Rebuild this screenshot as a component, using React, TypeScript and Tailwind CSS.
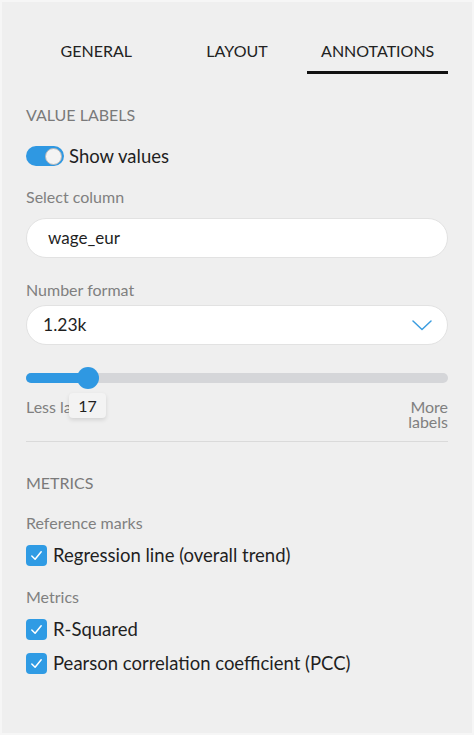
const tabs = ["GENERAL", "LAYOUT", "ANNOTATIONS"];

const CheckBox = () => (
    <span className="flex items-center justify-center w-[21px] h-[21px] rounded-[4px] bg-[#2f9be4] shrink-0">
        <svg width="15" height="15" viewBox="0 0 16 16" fill="none">
            <path d="M3 8.5 L6.5 12 L13 4" stroke="white" strokeWidth="1.6" strokeLinecap="round" strokeLinejoin="round" />
        </svg>
    </span>
);

const CheckRow = ({ label, className }: { label: string; className: string }) => (
    <label className={`flex items-center gap-[6px] h-[22px] ${className}`}>
        <CheckBox />
        <span className="text-[18.5px] text-[#1f1f1f] leading-[22px]">{label}</span>
    </label>
);

const App = () => {
    return (
        <div
            className="w-[474px] h-[735px] bg-[#efefef] border-2 border-[#f6f6f6] overflow-hidden"
            style={{ fontFamily: "Lato, 'Noto Sans', sans-serif" }}
        >
            <div className="flex px-[24px] -mt-[2px]">
                {tabs.map((t) => (
                    <button
                        key={t}
                        type="button"
                        className={`flex-1 h-[74px] pt-[30px] text-center text-[16px] leading-[26px] text-[#222] border-b-[3px] ${
                            t === "ANNOTATIONS" ? "border-[#111]" : "border-transparent"
                        }`}
                    >
                        {t}
                    </button>
                ))}
            </div>

            <div className="flex flex-col px-[24px]">
                <h3 className="mt-[31px] text-[16px] leading-[20px] text-[#7a7a7a]">VALUE LABELS</h3>

                <div className="flex items-center gap-[5px] mt-[20px] h-[22px]">
                    <span className="relative flex items-center w-[38px] h-[20px] rounded-full bg-[#2f98e2]">
                        <span className="absolute right-[2px] w-[17px] h-[17px] rounded-full bg-[#f4f4f4] border border-[#b8b8b8]" />
                    </span>
                    <span className="text-[18.5px] text-[#1f1f1f] leading-[22px]">Show values</span>
                </div>

                <span className="mt-[20px] text-[16px] leading-[20px] text-[#808080]">Select column</span>
                <div className="mt-[11px] flex items-center h-[40px] rounded-full bg-white border border-[#e2e2e2] pl-[21px]">
                    <span className="text-[17px] text-[#1f1f1f]">wage_eur</span>
                </div>

                <span className="mt-[22px] text-[16px] leading-[20px] text-[#808080]">Number format</span>
                <div className="mt-[5px] flex items-center justify-between h-[40px] rounded-full bg-white border border-[#e2e2e2] pl-[16px] pr-[15px]">
                    <span className="text-[17.5px] text-[#1f1f1f]">1.23k</span>
                    <svg width="20" height="11" viewBox="0 0 20 11" fill="none">
                        <path d="M1 1 L10 9.5 L19 1" stroke="#3b9de0" strokeWidth="1.5" strokeLinecap="round" strokeLinejoin="round" />
                    </svg>
                </div>

                <div className="relative mt-[22px] h-[22px] flex items-center">
                    <div className="w-full h-[10px] rounded-full bg-[#d5d6d9]">
                        <div className="w-[62px] h-[10px] rounded-full bg-[#2f98e2]" />
                    </div>
                    <span className="absolute left-[51px] top-0 w-[22px] h-[22px] rounded-full bg-[#2f98e2]" />
                </div>

                <div className="relative mt-[10px] flex justify-between text-[16px] leading-[15px] text-[#808080]">
                    <span>Less labels</span>
                    <span className="text-right">
                        More
                        <br />
                        labels
                    </span>
                    <span className="absolute left-[43px] -top-[6px] w-[37px] h-[25px] rounded-[4px] bg-[#f3f3f3] shadow-[0_2px_4px_rgba(0,0,0,0.12)] flex items-center justify-center text-[16px] leading-[25px] text-[#1f1f1f]">
                        17
                    </span>
                </div>

                <div className="mt-[12px] h-px bg-[#dadada]" />

                <h3 className="mt-[31px] text-[16px] leading-[20px] text-[#7a7a7a]">METRICS</h3>

                <span className="mt-[20px] text-[16px] leading-[20px] text-[#808080]">Reference marks</span>
                <CheckRow label="Regression line (overall trend)" className="mt-[11px]" />

                <span className="mt-[21px] text-[16px] leading-[20px] text-[#808080]">Metrics</span>
                <CheckRow label="R-Squared" className="mt-[11px]" />
                <CheckRow label="Pearson correlation coefficient (PCC)" className="mt-[12px]" />
            </div>
        </div>
    );
};

export default App;
